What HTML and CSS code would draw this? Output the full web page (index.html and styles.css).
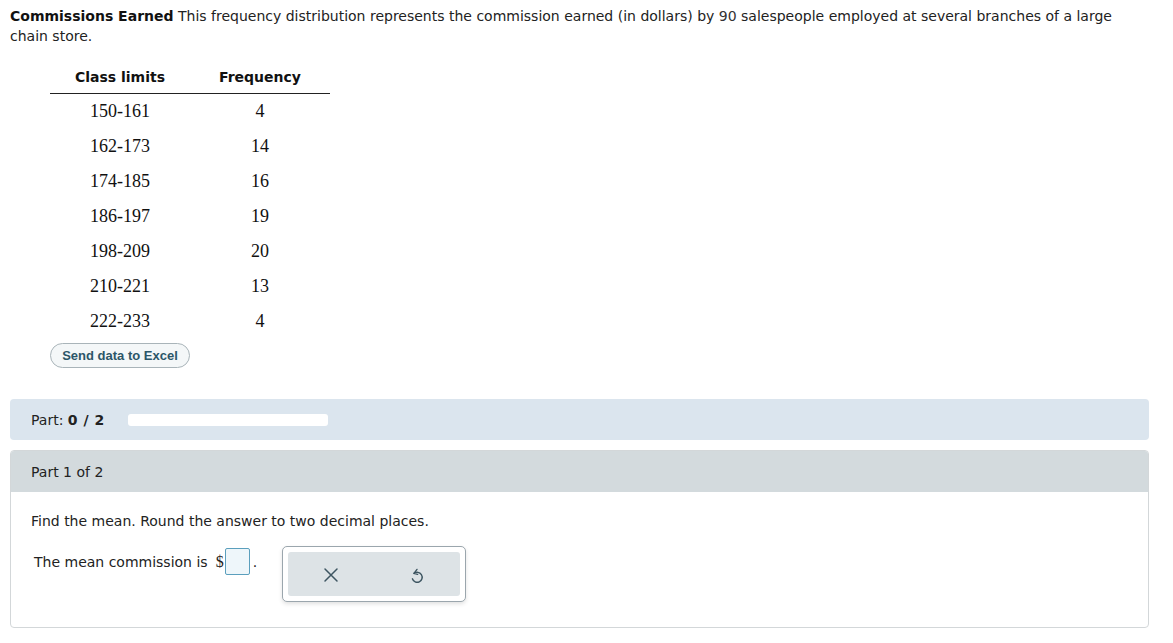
FILE: index.html
```html
<!DOCTYPE html>
<html>
<head>
<meta charset="utf-8">
<link rel="stylesheet" href="styles.css">
</head>
<body>
<div class="page">
  <p class="intro"><b>Commissions Earned</b> This frequency distribution represents the commission earned (in dollars) by <span class="num">90</span> salespeople employed at several branches of a large chain store.</p>

  <div class="table-wrap">
    <table class="data">
      <thead>
        <tr><th>Class limits</th><th>Frequency</th></tr>
      </thead>
      <tbody>
        <tr><td>150-161</td><td>4</td></tr>
        <tr><td>162-173</td><td>14</td></tr>
        <tr><td>174-185</td><td>16</td></tr>
        <tr><td>186-197</td><td>19</td></tr>
        <tr><td>198-209</td><td>20</td></tr>
        <tr><td>210-221</td><td>13</td></tr>
        <tr><td>222-233</td><td>4</td></tr>
      </tbody>
    </table>
    <button class="excel">Send data to Excel</button>
  </div>

  <div class="partbar">
    <span class="partlabel">Part: <b>0 / 2</b></span>
    <span class="progress"></span>
  </div>

  <div class="part">
    <div class="part-head">Part 1 of 2</div>
    <div class="part-body">
      <p class="q">Find the mean. Round the answer to two decimal places.</p>
      <div class="answer-row">
        <div class="answer">The mean commission is <span class="dollar">$</span><span class="input"></span><span class="dot">.</span></div>
        <div class="tools">
          <div class="tools-inner">
            <svg class="ico" width="16" height="16" viewBox="0 0 16 16"><path d="M2 2 L14 14 M14 2 L2 14" stroke="#3d5561" stroke-width="1.5" fill="none" stroke-linecap="round"/></svg>
            <svg class="ico" width="16" height="18" viewBox="0 0 16 18"><path d="M5 7.4 A5 5 0 1 1 3.4 12.8" stroke="#3d5561" stroke-width="1.4" fill="none" stroke-linecap="round"/><path d="M8 3.4 L5 7.4 L8.6 8.4" stroke="#3d5561" stroke-width="1.4" fill="none" stroke-linecap="round" stroke-linejoin="round"/></svg>
          </div>
        </div>
      </div>
    </div>
  </div>
</div>
</body>
</html>
```
FILE: styles.css
```css
* { box-sizing: border-box; }
html, body { margin: 0; padding: 0; background: #fff; }
body {
  font-family: "DejaVu Sans", Verdana, sans-serif;
  font-size: 14px;
  color: #222;
}
.page { padding: 6px 24px 0 10px; }
.intro { margin: 0; line-height: 20px; }
.intro b { color: #111; }
.num { color: #333; }

.table-wrap { padding: 14px 0 0 40px; }
.data { border-collapse: collapse; width: 280px; }
.data th {
  font-weight: bold;
  font-size: 14px;
  line-height: 16px;
  width: 140px;
  height: 33px;
  padding: 0 0 8px;
  vertical-align: bottom;
  border-bottom: 1px solid #222;
  color: #111;
}
.data td {
  font-family: "Liberation Serif", serif;
  font-size: 18px;
  text-align: center;
  height: 35px;
  padding: 2px 0 0;
  color: #111;
}
.excel {
  display: block;
  margin-top: 5px;
  height: 25px;
  width: 140px;
  border: 1px solid #a9b4b9;
  border-radius: 13px;
  background: #f4f7f8;
  color: #2c5668;
  font-family: "Liberation Sans", Arial, sans-serif;
  font-weight: bold;
  font-size: 13px;
  padding: 0 0 1px;
}

.partbar {
  margin-top: 31px;
  height: 41px;
  background: #dbe5ee;
  border-radius: 4px;
  display: flex;
  align-items: center;
  padding-left: 21px;
  gap: 23px;
}
.partlabel b { letter-spacing: 0.5px; }
.progress {
  display: block;
  width: 200px;
  height: 12px;
  background: #fff;
  border-radius: 3px;
}

.part {
  margin-top: 10px;
  border: 1px solid #d3d7d9;
  border-radius: 4px;
  overflow: hidden;
}
.part-head {
  height: 41px;
  background: #d3dadd;
  display: flex;
  align-items: center;
  padding-left: 20px;
}
.part-body { padding: 20px 20px 24px 20px; height: 135px; }
.q { margin: 0; line-height: 18px; }
.answer-row { display: flex; align-items: flex-start; margin-top: 16px; }
.answer { display: flex; align-items: center; padding: 2px 0 0 3px; }
.dollar { font-family: "Liberation Serif", serif; font-size: 16px; margin-left: 8px; }
.input {
  display: inline-block;
  width: 25px;
  height: 27px;
  border: 1px solid #5b9fbd;
  border-radius: 2px;
  background: #eef6fa;
  margin-left: 1px;
}
.dot { margin-left: 3px; }
.tools {
  margin-left: 25px;
  width: 184px;
  height: 56px;
  border: 1px solid #9ba6ad;
  border-radius: 5px;
  padding: 5px;
  background: #fff;
  box-shadow: 0 2px 4px rgba(0,0,0,0.12);
}
.tools-inner {
  height: 100%;
  background: #dde3e6;
  border-radius: 3px;
  display: flex;
  align-items: center;
  justify-content: space-around;
  padding: 2px 0 0;
}
.ico { display: block; }
```
